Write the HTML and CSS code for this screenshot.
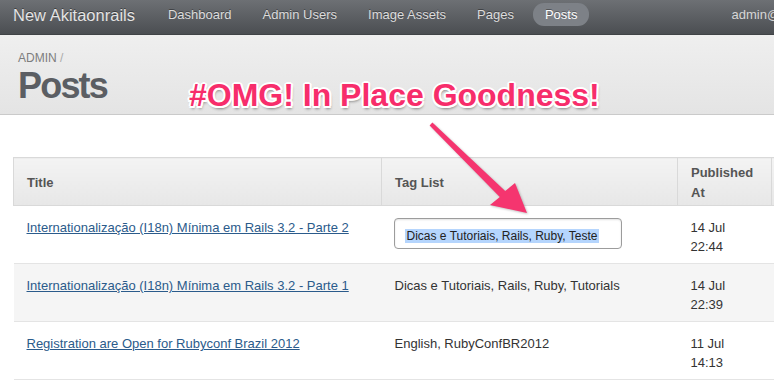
FILE: index.html
```html
<!DOCTYPE html>
<html lang="en">
<head>
  <meta charset="UTF-8" />
  <meta name="viewport" content="width=device-width, initial-scale=1.0"/>
  <title>Posts | New Akitaonrails</title>
  <link rel="stylesheet" href="styles.css">
</head>
<body>

  <div class="page">
    <nav class="topbar">
      <a class="brand" href="#">New Akitaonrails</a>
      <ul class="nav">
        <li><a href="#">Dashboard</a></li>
        <li><a href="#">Admin Users</a></li>
        <li><a href="#">Image Assets</a></li>
        <li><a href="#">Pages</a></li>
        <li class="active"><a href="#">Posts</a></li>
      </ul>
      <div class="nav-user">admin@akitaonrails.com</div>
    </nav>

    <header class="page-header">
      <div class="breadcrumb">ADMIN <span class="divider">/</span></div>
      <h1>Posts</h1>
    </header>

    <main class="content">
      <table class="posts">
        <colgroup>
          <col class="col-title">
          <col class="col-tags">
          <col class="col-date">
          <col>
        </colgroup>
        <thead>
          <tr>
            <th>Title</th>
            <th>Tag List</th>
            <th>Published At</th>
            <th></th>
          </tr>
        </thead>
        <tbody>
          <tr>
            <td><a href="#">Internationalização (I18n) Mínima em Rails 3.2 - Parte 2</a></td>
            <td>
              <div class="inplace-editor"><span class="selected">Dicas e Tutoriais, Rails, Ruby, Teste</span></div>
            </td>
            <td>14 Jul<br>22:44</td>
            <td></td>
          </tr>
          <tr class="odd">
            <td><a href="#">Internationalização (I18n) Mínima em Rails 3.2 - Parte 1</a></td>
            <td>Dicas e Tutoriais, Rails, Ruby, Tutorials</td>
            <td>14 Jul<br>22:39</td>
            <td></td>
          </tr>
          <tr>
            <td><a href="#">Registration are Open for Rubyconf Brazil 2012</a></td>
            <td>English, RubyConfBR2012</td>
            <td>11 Jul<br>14:13</td>
            <td></td>
          </tr>
        </tbody>
      </table>
    </main>
  </div>

  <!-- screenshot annotation -->
  <div class="callout">#OMG! In Place Goodness!</div>
  <svg class="arrow" width="774" height="382" viewBox="0 0 774 382">
    <polygon points="432.4,122.5 505.2,191.1 515,183 527,213 490,205 499.8,196.9 429.6,125.5" fill="#f5356f"/>
  </svg>

</body>
</html>
```

FILE: styles.css
```css
html, body {
  margin: 0;
  padding: 0;
  overflow: hidden;
}

body {
  font-family: "Liberation Sans", Arial, Helvetica, sans-serif;
  font-size: 13px;
  color: #333;
  background: #fff;
}

.page {
  width: 887px;
}

/* top bar */
.topbar {
  display: flex;
  align-items: flex-start;
  height: 35px;
  box-sizing: border-box;
  padding: 3px 13px 0;
  background: linear-gradient(#6d7074, #4b4e52);
  border-bottom: 1px solid #404346;
  white-space: nowrap;
}

.brand {
  font-size: 16.5px;
  line-height: 24px;
  color: #e4e4e4;
  text-decoration: none;
  text-shadow: 0 -1px 0 rgba(0, 0, 0, 0.4);
  margin-right: 21px;
}

.nav {
  display: flex;
  gap: 7px;
  list-style: none;
  margin: 0;
  padding: 0;
}

.nav a {
  display: block;
  padding: 1px 12px 0;
  line-height: 22px;
  color: #dcdcdc;
  text-decoration: none;
  text-shadow: 0 -1px 0 rgba(0, 0, 0, 0.35);
}

.nav .active a {
  background: #7d8187;
  border-radius: 11px;
  color: #fff;
}

.nav-user {
  margin-left: auto;
  padding-top: 1px;
  line-height: 22px;
  color: #d6d6d6;
}

/* page header */
.page-header {
  padding: 16px 18px 8px;
  background: linear-gradient(#efefef, #e4e4e4);
  border-bottom: 1px solid #cacaca;
}

.breadcrumb {
  font-size: 12px;
  line-height: 15px;
  color: #7d7d7d;
}

.breadcrumb .divider {
  color: #aaa;
}

h1 {
  margin: 0;
  font-size: 36px;
  line-height: 40px;
  letter-spacing: -1.8px;
  color: #5b5e63;
}

/* posts table */
.content {
  padding: 42px 13px 0;
}

.posts {
  width: 100%;
  border-collapse: collapse;
  table-layout: fixed;
}

.col-title { width: 368px; }
.col-tags { width: 296px; }
.col-date { width: 94px; }

.posts th {
  padding: 5px 13px 2px;
  line-height: 20px;
  text-align: left;
  font-weight: bold;
  color: #555;
  background: linear-gradient(#f3f3f3, #e7e7e7);
  border: 1px solid #d9d9d9;
  vertical-align: middle;
}

.posts td {
  height: 58px;
  box-sizing: border-box;
  padding: 12px 13px 0;
  line-height: 19px;
  vertical-align: top;
  border-bottom: 1px solid #e4e4e4;
}

.posts tr.odd td {
  background: #f5f5f5;
}

.posts a {
  color: #2b5b8b;
}

.inplace-editor {
  width: 228px;
  height: 31px;
  box-sizing: border-box;
  margin-left: -1px;
  padding: 8px 10px 0;
  border: 1px solid #9c9c9c;
  border-radius: 4px;
  background: #fff;
  box-shadow: inset 0 1px 2px rgba(0, 0, 0, 0.12);
  font-size: 12px;
  color: #222;
  white-space: nowrap;
}

.inplace-editor .selected {
  display: inline-block;
  padding: 0 2px;
  line-height: 14px;
  background: #b5d5fd;
}

/* annotation drawn over the screenshot */
.callout {
  position: absolute;
  left: 189px;
  top: 79px;
  font-size: 32px;
  line-height: 32px;
  font-weight: bold;
  color: #f72d6b;
  white-space: nowrap;
  text-shadow:
    2px 0 0 #fff, -2px 0 0 #fff, 0 2px 0 #fff, 0 -2px 0 #fff,
    1.5px 1.5px 0 #fff, -1.5px 1.5px 0 #fff, 1.5px -1.5px 0 #fff, -1.5px -1.5px 0 #fff,
    1px 3px 3px rgba(0, 0, 0, 0.45);
}

.arrow {
  position: absolute;
  left: 0;
  top: 0;
  pointer-events: none;
  filter: drop-shadow(1px 1px 1px rgba(0, 0, 0, 0.25));
}
```
